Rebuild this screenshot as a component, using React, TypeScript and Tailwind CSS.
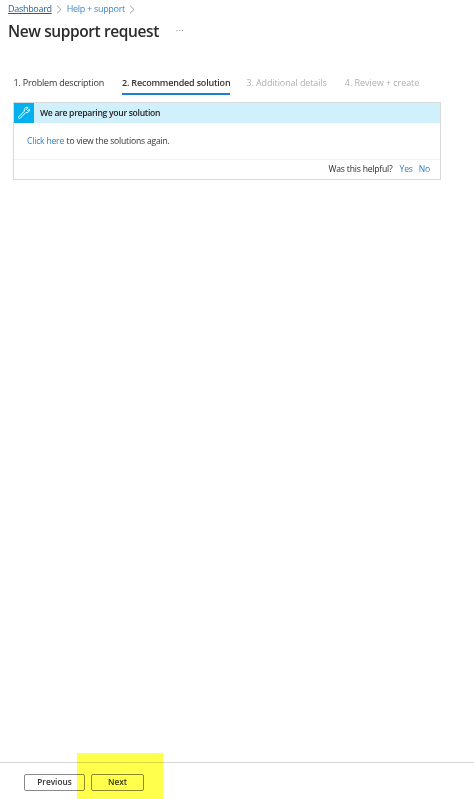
import React from "react";

function Chevron() {
  return (
    <svg width="6" height="9" viewBox="0 0 6 9" className="mx-[4.5px] mt-[1px]" fill="none" stroke="#8a8a8a" strokeWidth="0.8">
      <path d="M1 0.7 L5 4.5 L1 8.3" />
    </svg>
  );
}

export default function App() {
  return (
    <div className="relative flex h-[799px] w-[474px] flex-col overflow-hidden bg-white font-['Open_Sans','Noto_Sans',sans-serif] text-[#292827]">
      <div className="flex h-[17px] items-center pl-2 text-[9px] leading-[14px] tracking-[-0.3px]">
        <span className="text-[#1f5f9e] underline">Dashboard</span>
        <Chevron />
        <span className="text-[#3f87c9]">Help + support</span>
        <Chevron />
      </div>
      <div className="flex h-[27px] items-center pl-2">
        <span className="text-[15.5px] font-semibold leading-[24px] tracking-[-0.4px] text-[#2b2b2b]">New support request</span>
        <span className="ml-[17px] text-[9px] leading-none tracking-[0.5px] text-[#777]">···</span>
      </div>
      <div className="mt-[29px] flex h-[25px] items-start pl-[13.5px] text-[9px] leading-[20px] tracking-[-0.2px]">
        <span className="mr-[18px] text-[#333]">1. Problem description</span>
        <span className="mr-[16px] h-[22px] border-b-2 border-[#1f7fcf] font-semibold text-[#333]">2. Recommended solution</span>
        <span className="mr-[18px] tracking-[-0.1px] text-[#b0b0b0]">3. Additional details</span>
        <span className="tracking-[-0.05px] text-[#b0b0b0]">4. Review + create</span>
      </div>
      <div className="ml-[13px] mt-[4px] flex h-[78px] w-[428px] flex-col border border-[#d9d9d9]">
        <div className="flex h-[20px] items-center bg-[#d0f1fb]">
          <div className="flex h-[20px] w-[20px] items-center justify-center bg-[#04b1ee]">
            <svg width="14" height="14" viewBox="0 0 14 14" fill="none" stroke="#fff" strokeWidth="1">
              <path d="M1.6 11 L7.3 5.2 C6.7 3.4 7.9 1.4 10 1.3 L11 1.4 L9.3 3.2 L10.7 4.7 L12.5 3 C12.9 5.3 10.8 7.3 8.7 6.6 L3 12.4 C2.2 13 1 11.9 1.6 11 Z" />
            </svg>
          </div>
          <span className="ml-[6px] text-[8.6px] font-semibold leading-none tracking-[-0.3px] text-[#222]">We are preparing your solution</span>
        </div>
        <div className="flex h-[37px] items-center border-b border-[#f3f3f3] pl-[13px] pt-[1px] text-[8.6px] tracking-[-0.2px]">
          <span className="text-[#2f7fc4]">Click here</span>
          <span className="ml-[2.5px] text-[#333]">to view the solutions again.</span>
        </div>
        <div className="flex flex-1 items-center justify-end pr-[10px] text-[8.6px] tracking-[-0.2px]">
          <span className="text-[#2b2b2b]">Was this helpful?</span>
          <span className="ml-[7px] text-[#2f7fc4]">Yes</span>
          <span className="ml-[6px] text-[#2f7fc4]">No</span>
        </div>
      </div>
      <div className="mt-auto flex h-[37px] gap-[6px] border-t border-[#d6d6d6] pl-[24px] pt-[11px]">
        <button className="h-[17px] w-[61px] rounded-[2px] border border-[#8a8a8a] text-[8.3px] font-semibold leading-none text-[#333]">Previous</button>
        <button className="h-[17px] w-[53px] rounded-[2px] border border-[#8a8a8a] text-[8.3px] font-semibold leading-none text-[#333]">Next</button>
      </div>
      <div className="absolute left-[77px] top-[753px] h-[46px] w-[86px] bg-[#ffff00]/70 mix-blend-multiply" />
    </div>
  );
}
